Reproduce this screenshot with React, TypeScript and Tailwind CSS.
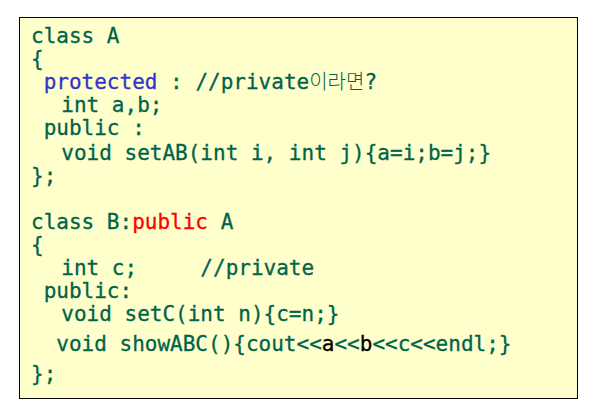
const G = "text-[#00634b]";

const Line = ({ className = "", children }: { className?: string; children?: React.ReactNode }) => (
  <div className={`h-[23px] leading-[23px] whitespace-pre ${className}`}>{children}</div>
);

export default function App() {
  return (
    <div className="w-[600px] h-[415px] bg-white pt-[17px] pl-[19px]">
      <div
        className={`w-[559px] h-[382px] border border-black bg-[#ffffcc] pl-[11px] pt-[7px] text-[21px] [-webkit-text-stroke:0.3px_currentColor] ${G}`}
        style={{ fontFamily: '"DejaVu Sans Mono", "Noto Sans CJK KR", monospace' }}
      >
        <Line>class A</Line>
        <Line>{"{"}</Line>
        <Line>
          {" "}
          <span className="text-[#3333cc]">protected</span> : //private
          <span
            style={{ fontFamily: '"Noto Sans CJK KR", sans-serif' }}
            className="text-[20px] leading-[20px] font-light [-webkit-text-stroke:0px]"
          >
            이라면
          </span>
          ?
        </Line>
        <Line className="pl-[5px]">{"  int a,b;"}</Line>
        <Line>{" public :"}</Line>
        <Line className="pl-[5px] mt-[2px]">{"  void setAB(int i, int j){a=i;b=j;}"}</Line>
        <Line>{"};"}</Line>
        <Line />
        <Line>
          class B:<span className="text-[#ff0000]">public</span> A
        </Line>
        <Line>{"{"}</Line>
        <Line className="pl-[5px]">{"  int c;     //private"}</Line>
        <Line>{" public:"}</Line>
        <Line className="pl-[5px]">{"  void setC(int n){c=n;}"}</Line>
        <Line className="mt-[7px]">
          {"  void showABC(){cout<<"}
          <span className="text-black">a</span>
          {"<<"}
          <span className="text-black">b</span>
          {"<<c<<endl;}"}
        </Line>
        <Line className="mt-[7px]">{"};"}</Line>
      </div>
    </div>
  );
}
